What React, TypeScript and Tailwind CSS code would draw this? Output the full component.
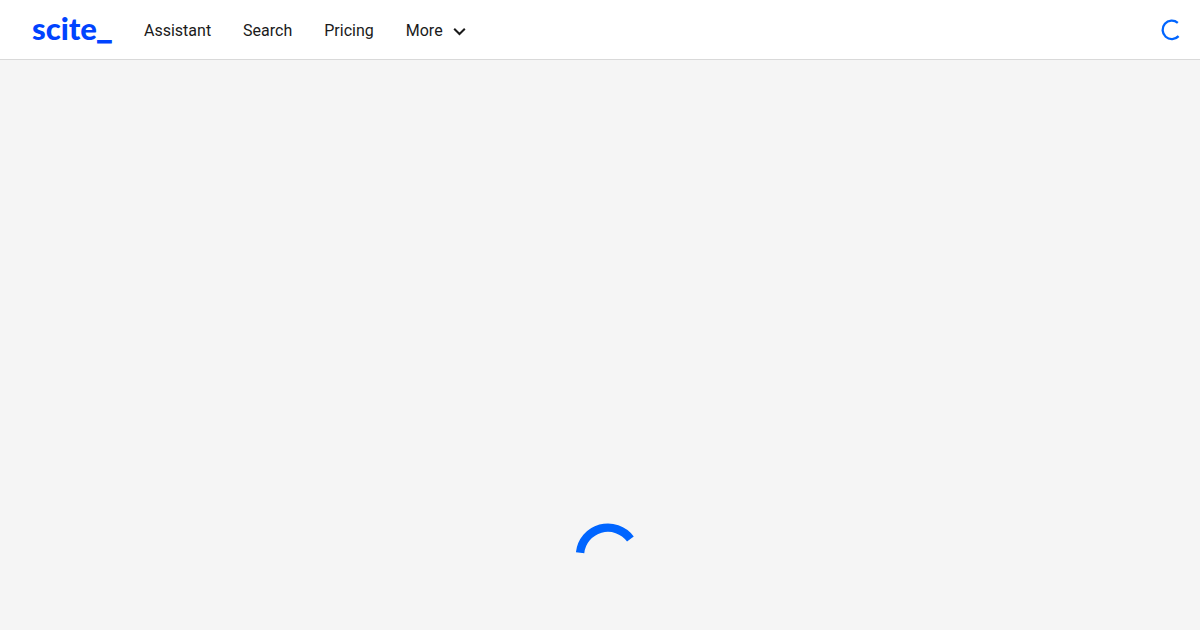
import { ReactNode } from "react";

function NavLink({ href, children }: { href: string; children: ReactNode }) {
  return (
    <a href={href} className="text-base leading-6 text-[#1a1a1a] hover:text-[#0043ff]">
      {children}
    </a>
  );
}

function Header() {
  return (
    <header className="flex h-15 items-center border-b border-[#d9d9d9] bg-white pl-8 pr-4">
      <a
        href="/"
        className="w-20 whitespace-nowrap pb-0.5 font-['Lato',sans-serif] text-[31px] font-black leading-8 text-[#0043ff]"
      >
        scite<span className="font-['Inter',sans-serif] font-bold">_</span>
      </a>

      <nav className="ml-8 flex items-center gap-8 pt-0.5">
        <NavLink href="/assistant">Assistant</NavLink>
        <NavLink href="/search">Search</NavLink>
        <NavLink href="/pricing">Pricing</NavLink>
        <button type="button" className="flex items-center gap-2 text-base leading-6 text-[#1a1a1a]">
          More
          <svg className="h-4 w-4" viewBox="0 0 16 16" fill="none" aria-hidden="true">
            <path d="M3.2 5.7 8.5 11l5.3-5.3" stroke="currentColor" strokeWidth="2" />
          </svg>
        </button>
      </nav>

      {/* Account menu is still loading */}
      <div className="ml-auto" role="status" aria-label="Loading account">
        <svg className="h-6 w-6" viewBox="0 0 24 24" fill="none">
          <path
            d="M17.8 4.9A9.2 9.2 0 1 0 18.6 18.1"
            stroke="#0065ff"
            strokeWidth="2.3"
            strokeLinecap="butt"
          />
        </svg>
      </div>
    </header>
  );
}

function PageSpinner() {
  return (
    <div role="status" aria-label="Loading page">
      <svg className="h-16 w-16 overflow-visible" viewBox="0 0 64 64" fill="none">
        <path d="M4.1 28.8A28 28 0 0 1 54.4 14.9" stroke="#0065ff" strokeWidth="8.4" />
      </svg>
    </div>
  );
}

export default function App() {
  return (
    <div className="flex min-h-screen flex-col bg-[#f5f5f5] font-['Roboto',Arial,sans-serif]">
      <Header />
      <main className="flex flex-1 justify-center overflow-hidden pl-4 pt-116">
        <PageSpinner />
      </main>
    </div>
  );
}
